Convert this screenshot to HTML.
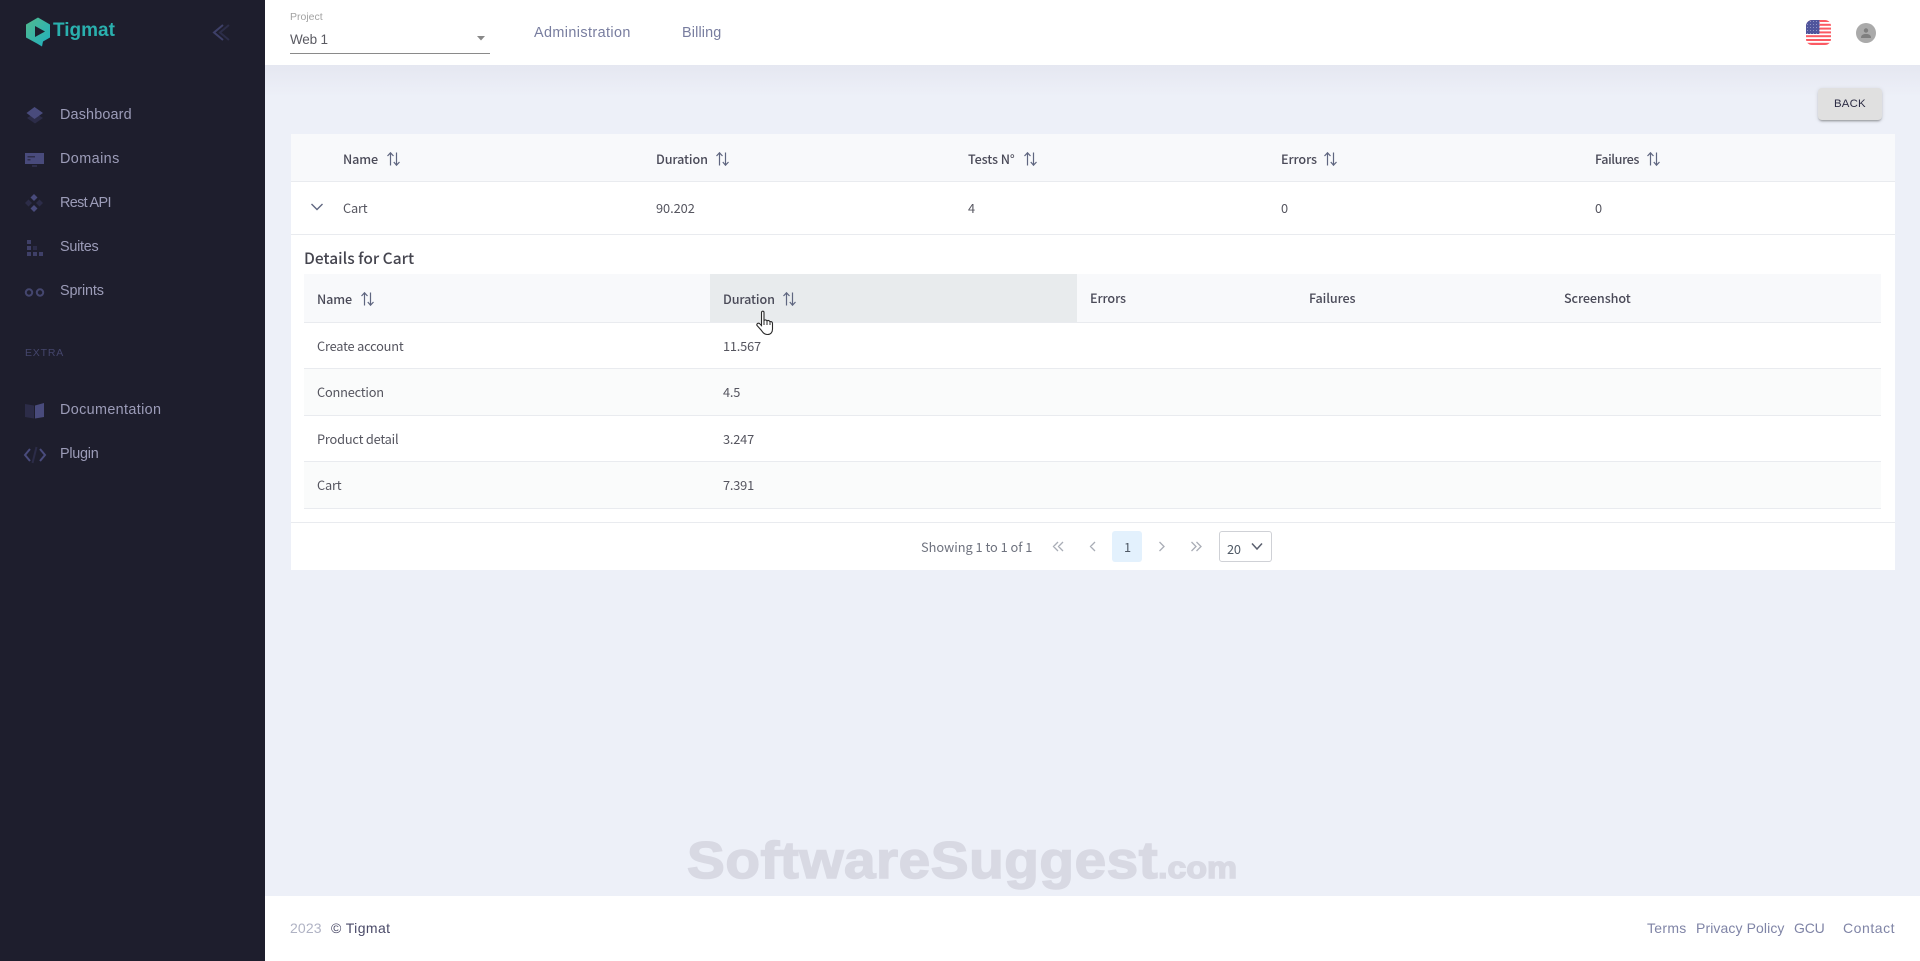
<!DOCTYPE html>
<html lang="en"><head><meta charset="utf-8"><title>Tigmat</title>
<style>
html,body{margin:0;padding:0;width:1920px;height:961px;overflow:hidden;background:#edf0f8}
*{box-sizing:border-box}
.b{position:absolute}
.t{position:absolute;white-space:nowrap;line-height:20px;height:20px;margin-top:-10px}
.p{font-family:"Liberation Sans",sans-serif}
.n{font-family:"Noto Sans CJK JP","Liberation Sans",sans-serif;font-size:12.8px;letter-spacing:-.2px;color:#55555f}
.h{font-weight:500;color:#4a4a58;font-size:12.6px;letter-spacing:-.1px}
.nav{font-family:"Liberation Sans",sans-serif;font-size:14.4px;color:#9c9cb8;left:60px}
.line{position:absolute;height:1px;background:#e9ebef}
svg{position:absolute;overflow:visible}
</style></head><body>
<div class="b" style="left:0;top:0;width:265px;height:961px;background:#1e1e2d"></div>
<div class="b" style="left:265px;top:65px;width:1655px;height:32px;background:linear-gradient(#e5e7f1,#edf0f8)"></div>
<div class="b" style="left:265px;top:0;width:1655px;height:65px;background:#fff"></div>
<div class="b" style="left:265px;top:896px;width:1655px;height:65px;background:#fff"></div>

<!-- logo -->
<svg style="left:0;top:0" width="130" height="60"><defs><linearGradient id="g" x1="0" y1="0" x2="1" y2="1"><stop offset="0" stop-color="#52b98c"/><stop offset="1" stop-color="#1fb0c0"/></linearGradient></defs>
<path d="M38 17.500L50 24.500V37.500L43 41.500L42 46.500L37 43.500L26 37.500V24.500Z" fill="url(#g)"/><path d="M35 26L45 31.500L35 37Z" fill="#1e1e2d"/></svg>
<span class="t p" style="left:53px;top:31px;font-size:19px;font-weight:700;color:#2ab0ae">Tigmat</span>
<svg style="left:0;top:0" width="240" height="60" fill="none"><path d="M223 25L214 32.500L223 40" stroke="#3e4068" stroke-width="2"/><path d="M229 25L220 32.500L229 40" stroke="#2c2d48" stroke-width="2"/></svg>

<!-- nav icons -->
<svg style="left:0;top:90px" width="60" height="400">
<path d="M27 29L35 24L43 29L35 34.500L27 29Z" fill="#2c2c48" transform="translate(0,-1)"/>
<path d="M26.500 23L34.500 17L43 23L34.500 29Z" fill="#494b7c"/>
<path d="M25 63H44V74H25Z" fill="#494b7c"/><path d="M27.500 66H35V67.500H27.500ZM27.500 69H30.500V70.500H27.500Z" fill="#2e2e4a"/><path d="M32 75H37V77H32Z" fill="#2e2e4a"/>
<path d="M34 104L37.500 107.500L34 111L30.500 107.500Z" fill="#494b7c"/><path d="M34 115L37.500 118.500L34 122L30.500 118.500Z" fill="#494b7c"/>
<path d="M28.500 109.500L32 113L28.500 116.500L25 113Z" fill="#2c2c48"/><path d="M39.500 109.500L43 113L39.500 116.500L36 113Z" fill="#2c2c48"/>
<g fill="#3f4068"><rect x="27" y="150" width="4" height="4"/><rect x="27" y="156" width="4" height="4"/><rect x="27" y="162" width="4" height="4"/><rect x="33" y="162" width="4" height="4"/><rect x="39" y="162" width="4" height="4"/></g><rect x="33" y="156" width="4" height="4" fill="#2c2c48"/>
<g fill="none" stroke="#44466e" stroke-width="2"><circle cx="29" cy="202.500" r="3.200"/><circle cx="40" cy="202.500" r="3.200"/></g>
<path d="M25 314L34 315.500V328.500L25 327Z" fill="#2c2c48"/><path d="M35 315.500L44 313V327L35 328.500Z" fill="#494b7c"/>
<g fill="none" stroke-width="2"><path d="M30 359L25 365L30 371" stroke="#494b7c"/><path d="M40 359L45 365L40 371" stroke="#494b7c"/><path d="M36.500 357L32.500 373" stroke="#2c2c48"/></g>
</svg>
<span class="t nav" style="top:115px;letter-spacing:.15px">Dashboard</span>
<span class="t nav" style="top:159px;letter-spacing:.42px">Domains</span>
<span class="t nav" style="top:203px;letter-spacing:-.65px">Rest API</span>
<span class="t nav" style="top:247px;letter-spacing:-.25px">Suites</span>
<span class="t nav" style="top:291px;letter-spacing:-.15px">Sprints</span>
<span class="t p" style="left:25px;top:353px;font-size:10.500px;letter-spacing:.8px;color:#44456b">EXTRA</span>
<span class="t nav" style="top:410px;letter-spacing:.35px">Documentation</span>
<span class="t nav" style="top:454px;letter-spacing:-.25px">Plugin</span>

<!-- top bar -->
<span class="t p" style="left:290px;top:17px;font-size:10.500px;color:#a2a2a2">Project</span>
<span class="t p" style="left:290px;top:40px;font-size:13.500px;letter-spacing:-.2px;color:#5a5a62">Web 1</span>
<div class="b" style="left:290px;top:53px;width:200px;height:1px;background:#8a8a8a"></div>
<svg style="left:476.500px;top:36px" width="8" height="5"><path d="M0 0H8L4 4.500Z" fill="#888"/></svg>
<span class="t p" style="left:534px;top:33px;font-size:14.400px;letter-spacing:.4px;color:#787d9f">Administration</span>
<span class="t p" style="left:682px;top:33px;font-size:14.400px;letter-spacing:.15px;color:#787d9f">Billing</span>

<svg style="left:1806px;top:20px" width="25" height="25"><defs><clipPath id="c"><rect width="25" height="25" rx="6"/></clipPath><pattern id="st" width="3" height="3" patternUnits="userSpaceOnUse"><rect width="3" height="3" fill="#50559c"/><rect x="1" y="1" width="1" height="1" fill="#8f93c4"/></pattern></defs><g clip-path="url(#c)"><rect width="25" height="25" fill="#fff"/><g fill="#fb5a63"><rect width="25" height="2"/><rect y="3.800" width="25" height="2"/><rect y="7.600" width="25" height="2"/><rect y="11.400" width="25" height="2"/><rect y="15.200" width="25" height="2"/><rect y="19" width="25" height="2"/><rect y="22.800" width="25" height="2.200"/></g><rect width="13.500" height="14" fill="url(#st)"/></g></svg>
<svg style="left:1856px;top:23px" width="20" height="20"><circle cx="10" cy="10" r="10" fill="#aaa"/><circle cx="10" cy="7.500" r="2.200" fill="#7f7f7f"/><path d="M5 15C5 11.500 7.500 11 10 11S15 11.500 15 15Z" fill="#7f7f7f"/></svg>

<div class="b" style="left:1818px;top:88px;width:64px;height:32px;background:#e0e0e0;border-radius:4px;box-shadow:0 2px 2px -1px rgba(0,0,0,.35),0 1px 4px rgba(0,0,0,.12)"></div>
<span class="t p" style="left:1834px;top:104px;font-size:11.400px;letter-spacing:.2px;color:#2c2c44">BACK</span>

<!-- card -->
<div class="b" style="left:291px;top:134px;width:1604px;height:436px;background:#fff"></div>
<div class="b" style="left:291px;top:134px;width:1604px;height:47px;background:#f8f9fb"></div>
<div class="line" style="left:291px;top:181px;width:1604px;height:1px"></div>
<div class="line" style="left:291px;top:234px;width:1604px"></div>

<span class="t n h" style="left:343px;top:159px">Name</span>
<span class="t n h" style="left:656px;top:159px">Duration</span>
<span class="t n h" style="left:968px;top:159px">Tests N°</span>
<span class="t n h" style="left:1281px;top:159px">Errors</span>
<span class="t n h" style="left:1595px;top:159px;letter-spacing:-.4px">Failures</span>

<span class="t n" style="left:343px;top:208px">Cart</span>
<span class="t n" style="left:656px;top:208px;letter-spacing:-.05px">90.202</span>
<span class="t n" style="left:968px;top:208px">4</span>
<span class="t n" style="left:1281px;top:208px">0</span>
<span class="t n" style="left:1595px;top:208px">0</span>

<span class="t n" style="left:304px;top:258px;font-size:15.500px;letter-spacing:0;font-weight:500;color:#45454f">Details for Cart</span>

<div class="b" style="left:304px;top:274px;width:1577px;height:49px;background:#f8f9fb"></div>
<div class="b" style="left:710px;top:274px;width:367px;height:49px;background:#e8ebed"></div>
<div class="line" style="left:304px;top:322px;width:1577px"></div>
<div class="b" style="left:304px;top:369px;width:1577px;height:46px;background:#fafbfb"></div>
<div class="b" style="left:304px;top:462px;width:1577px;height:46px;background:#fafbfb"></div>
<div class="line" style="left:304px;top:368px;width:1577px"></div>
<div class="line" style="left:304px;top:415px;width:1577px"></div>
<div class="line" style="left:304px;top:461px;width:1577px"></div>
<div class="line" style="left:304px;top:508px;width:1577px"></div>
<div class="line" style="left:291px;top:522px;width:1604px"></div>

<svg style="left:0;top:0" width="1920" height="600" fill="none" stroke="#5f6680" stroke-width="1.200">
<defs><g id="s"><path d="M3.500 13.500V1M.5 4L3.500 .8L6.500 4"/><path d="M9.500 .5V13M6.800 10L9.500 13.200L12.500 10"/></g></defs>
<use href="#s" x="387" y="152"/><use href="#s" x="716" y="152"/><use href="#s" x="1024" y="152"/><use href="#s" x="1324" y="152"/><use href="#s" x="1647" y="152"/>
<use href="#s" x="361" y="292"/><use href="#s" x="783" y="292"/>
<path d="M311.500 204L317 209.500L322.500 204" stroke-width="1.400"/>
</svg>

<span class="t n h" style="left:317px;top:299px">Name</span>
<span class="t n h" style="left:723px;top:299px">Duration</span>
<span class="t n h" style="left:1090px;top:298px">Errors</span>
<span class="t n h" style="left:1309px;top:298px">Failures</span>
<span class="t n h" style="left:1564px;top:298px">Screenshot</span>

<span class="t n" style="left:317px;top:346px">Create account</span><span class="t n" style="left:723px;top:346px">11.567</span>
<span class="t n" style="left:317px;top:392px">Connection</span><span class="t n" style="left:723px;top:392px">4.5</span>
<span class="t n" style="left:317px;top:439px">Product detail</span><span class="t n" style="left:723px;top:439px">3.247</span>
<span class="t n" style="left:317px;top:485px">Cart</span><span class="t n" style="left:723px;top:485px">7.391</span>

<!-- cursor -->
<svg style="left:756px;top:310px" width="20" height="26"><path d="M5.500 2.500C5.500 .8 8 .8 8 2.500V10.500C9 9.500 10.500 9.800 11 11C12 10 13.500 10.500 14 11.800C15 11.200 16.500 11.800 16.500 13.500V19C16.500 22 15 24.500 11.500 24.500C8.500 24.500 7 23 5.500 20.500L1 15.500C.3 14 2 12.500 3.500 13.500L5.500 15.500Z" fill="#fff" stroke="#2a2a2a" stroke-width="1.100"/><path d="M8 10.500V15M11 11V15M14 11.800V15" stroke="#2a2a2a" fill="none"/></svg>

<!-- pagination -->
<span class="t n" style="left:921px;top:547px;letter-spacing:-.03px;color:#6e727e">Showing 1 to 1 of 1</span>
<div class="b" style="left:1112px;top:531px;width:30px;height:31px;background:#e3f1fd;border-radius:3px"></div>
<span class="t n" style="left:1124px;top:547px;color:#505a66">1</span>
<svg style="left:0;top:0" width="1300" height="600" fill="none" stroke="#a9adb6" stroke-width="1.300"><path d="M1058 542L1053.500 546.500L1058 551M1063 542L1058.500 546.500L1063 551M1095 542L1090.500 546.500L1095 551M1159.500 542L1164 546.500L1159.500 551M1191.500 542L1196 546.500L1191.500 551M1196.500 542L1201 546.500L1196.500 551"/><path d="M1252 543.500L1257 549L1262 543.500" stroke="#5a5f6e" stroke-width="1.500"/></svg>
<div class="b" style="left:1219px;top:531px;width:53px;height:31px;border:1px solid #cfd1d6;border-radius:3px"></div>
<span class="t n" style="left:1227px;top:549px;color:#505a66">20</span>

<!-- watermark -->
<span class="t" style="left:687px;top:861px;height:60px;line-height:60px;margin-top:-30px;transform:scaleX(1.09);transform-origin:left center;font-family:'Liberation Sans',sans-serif;font-weight:700;font-size:52px;letter-spacing:.5px;-webkit-text-stroke:1.500px #d8d9e3;color:#d8d9e3">SoftwareSuggest<span style="font-size:31px;letter-spacing:0">.com</span></span>

<!-- footer -->
<span class="t p" style="left:290px;top:928px;font-size:14px;letter-spacing:.15px;color:#b0b3c4">2023</span>
<span class="t p" style="left:331px;top:928px;font-size:14px;letter-spacing:.4px;color:#4a4a68">© Tigmat</span>
<span class="t p" style="left:1647px;top:928px;font-size:14px;letter-spacing:.3px;color:#7f84a6">Terms</span>
<span class="t p" style="left:1696px;top:928px;font-size:14px;letter-spacing:.1px;color:#7f84a6">Privacy Policy</span>
<span class="t p" style="left:1794px;top:928px;font-size:14px;letter-spacing:-.2px;color:#7f84a6">GCU</span>
<span class="t p" style="left:1843px;top:928px;font-size:14px;letter-spacing:.55px;color:#7f84a6">Contact</span>
</body></html>
